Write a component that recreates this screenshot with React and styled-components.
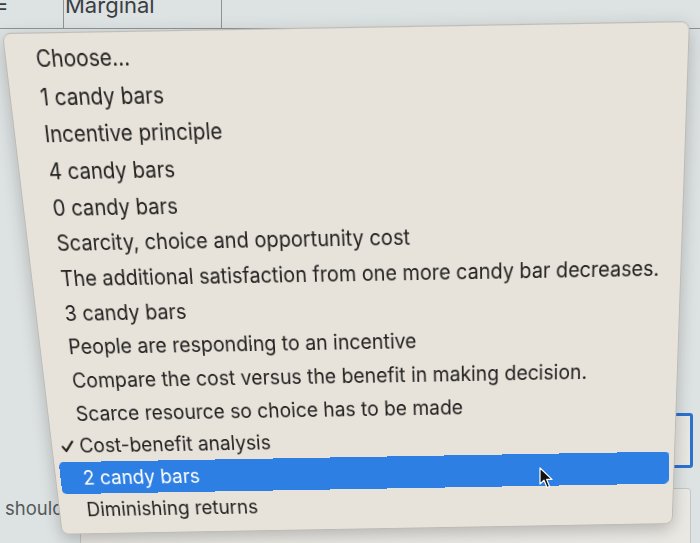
import React from "react";
import styled, { createGlobalStyle } from "styled-components";

const options = [
  "Choose...",
  "1 candy bars",
  "Incentive principle",
  "4 candy bars",
  "0 candy bars",
  "Scarcity, choice and opportunity cost",
  "The additional satisfaction from one more candy bar decreases.",
  "3 candy bars",
  "People are responding to an incentive",
  "Compare the cost versus the benefit in making decision.",
  "Scarce resource so choice has to be made",
  "Cost-benefit analysis",
  "2 candy bars",
  "Diminishing returns",
];

const CHECKED = 11;
const HOVERED = 12;

const App = () => {
  return (
    <Page>
      <GlobalStyle />
      <HeaderRow>
        <HeaderCell $w={64} $indent={-7}>
          =
        </HeaderCell>
        <HeaderCell $w={158}>Marginal</HeaderCell>
        <HeaderCell $last />
      </HeaderRow>
      <Body>
        <SelectRow>
          <SelectBox />
        </SelectRow>
        <LowerRow>
          <Label>should</Label>
          <Field />
        </LowerRow>
      </Body>

      <MenuLayer>
        <Menu>
          {options.map((text, index) => (
            <Option key={"opt" + index} $active={index === HOVERED}>
              {index === CHECKED && (
                <Check viewBox="0 0 14 13">
                  <polyline points="1.5,7 5,11.5 12.5,1.5" />
                </Check>
              )}
              {text}
            </Option>
          ))}
        </Menu>
      </MenuLayer>

      <Pointer viewBox="0 0 14 22">
        <path d="M1 1 L1 17 L5 13.2 L8 20.5 L10.6 19.4 L7.7 12.4 L13 12.4 Z" />
      </Pointer>
    </Page>
  );
};

const GlobalStyle = createGlobalStyle`
  html, body {
    margin: 0;
    padding: 0;
  }
  body {
    width: 700px;
    height: 543px;
    overflow: hidden;
    font-family: Inter, "Liberation Sans", sans-serif;
  }
`;

const Page = styled.div`
  position: relative;
  width: 700px;
  height: 543px;
  overflow: hidden;
  display: flex;
  flex-direction: column;
  background: #dde2e3;
`;

const HeaderRow = styled.div`
  display: flex;
  flex-shrink: 0;
  height: 28px;
  border-bottom: 1px solid #8e9395;
`;

const HeaderCell = styled.div`
  box-sizing: border-box;
  width: ${(props) => (props.$w ? props.$w + "px" : "auto")};
  flex: ${(props) => (props.$last ? 1 : "none")};
  border-right: ${(props) => (props.$last ? "none" : "1px solid #8e9395")};
  display: flex;
  align-items: flex-end;
  padding: 0 0 12px 1px;
  text-indent: ${(props) => props.$indent || 0}px;
  font-size: 22px;
  line-height: 22px;
  color: #3b3e41;
  white-space: nowrap;
  overflow: hidden;
`;

const Body = styled.div`
  flex: 1;
  display: flex;
  flex-direction: column;
  gap: 20px;
  padding-top: 384px;
`;

const SelectRow = styled.div`
  display: flex;
  justify-content: flex-end;
  height: 55px;
  padding-right: 7px;
`;

const SelectBox = styled.div`
  box-sizing: border-box;
  width: 320px;
  border: 3px solid #2d71d0;
  border-radius: 3px;
  background: #e8e7e2;
`;

const LowerRow = styled.div`
  display: flex;
  align-items: flex-start;
`;

const Label = styled.div`
  width: 80px;
  flex-shrink: 0;
  padding: 8px 0 0 5px;
  box-sizing: border-box;
  font-size: 18.5px;
  line-height: 24px;
  color: #55595c;
`;

const Field = styled.div`
  flex: 1;
  height: 62px;
  margin-right: 9px;
  border: 1px solid #c3c6c7;
  border-radius: 3px;
  background: #e9e8e3;
`;

const MenuLayer = styled.div`
  position: absolute;
  inset: 0;
  perspective: 1000px;
  perspective-origin: 468px 660px;
  pointer-events: none;
`;

const Menu = styled.div`
  position: absolute;
  left: 2px;
  top: 33px;
  width: 688px;
  box-sizing: border-box;
  padding: 5px 5px 9px;
  background: #e7e3db;
  border: 1px solid #bdbbb5;
  border-radius: 8px;
  box-shadow: 0 6px 18px rgba(0, 0, 0, 0.22);
  transform-origin: 0 0;
  transform: rotate(-1deg) rotateX(-14.6deg);
`;

const Option = styled.div`
  position: relative;
  display: flex;
  align-items: center;
  height: 34.7px;
  padding-left: 25px;
  border-radius: 5px;
  font-size: 21px;
  color: ${(props) => (props.$active ? "#ffffff" : "#232220")};
  background: ${(props) => (props.$active ? "#2e7fe4" : "transparent")};
  white-space: nowrap;
`;

const Check = styled.svg`
  position: absolute;
  left: 5px;
  top: 10px;
  width: 14px;
  height: 14px;
  fill: none;
  stroke: #232220;
  stroke-width: 2.3;
  stroke-linecap: round;
  stroke-linejoin: round;
`;

const Pointer = styled.svg`
  position: absolute;
  left: 539px;
  top: 467px;
  width: 14px;
  height: 22px;
  fill: #111;
  stroke: #fff;
  stroke-width: 1.2;
  stroke-linejoin: round;
`;

export default App;
